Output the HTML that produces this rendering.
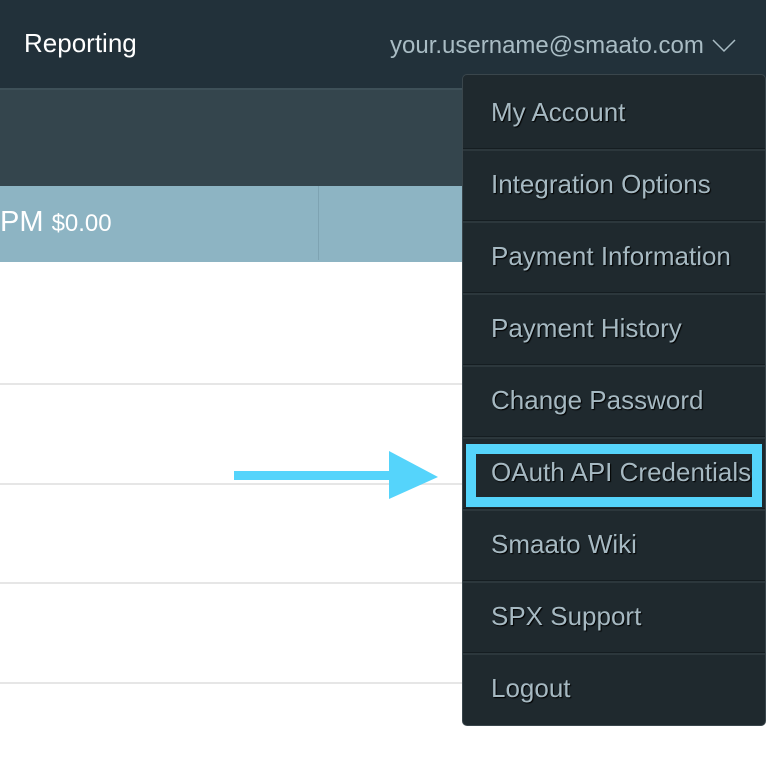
<!DOCTYPE html>
<html><head><style>
*{margin:0;padding:0;box-sizing:border-box}
body{width:766px;height:762px;overflow:hidden;background:#fff;font-family:"Liberation Sans",sans-serif;position:relative}
.hdr{position:absolute;left:0;top:0;width:766px;height:88px;background:#22313a}
.band{position:absolute;left:0;top:88px;width:766px;height:98px;background:#34454d;border-top:2px solid #3e5058}
.blue{position:absolute;left:0;top:186px;width:766px;height:76px;background:#8db4c3}
.div{position:absolute;left:318px;top:186px;width:1px;height:74px;background:#7ea3b2}
.hl{position:absolute;left:0;width:462px;height:2px;background:#e6e6e6}
.t{position:absolute;white-space:nowrap}
.dd{position:absolute;left:462px;top:74px;width:304px;height:652px;background:#1f292e;border:1px solid #3a464c;border-radius:5px;overflow:hidden}
.it{position:absolute;left:0;width:304px;height:72px;color:#a6b9c2;font-size:26px;padding-left:28px;line-height:72px;text-shadow:1px 1px 1px #000}
.sep{position:absolute;left:0;width:304px;height:3px;background:#2c373c;border-top:1px solid #151d21}
</style></head><body>
<div class="hdr"></div>
<div class="t" style="left:24px;top:28px;color:#fff;font-size:26px">Reporting</div>
<div class="t" style="left:390px;top:32px;color:#a9bcc4;font-size:24px">your.username@smaato.com</div>
<svg style="position:absolute;left:712px;top:38px" width="24" height="16"><path d="M1 2 L12 13 L23 2" stroke="#a9bcc4" stroke-width="1.5" fill="none"/></svg>
<div class="band"></div>
<div class="blue"></div>
<div class="div"></div>
<div class="t" style="left:0;top:206px;color:#fff;font-size:29px">PM <span style="font-size:24px">$0.00</span></div>
<div class="hl" style="top:383px"></div>
<div class="hl" style="top:483px"></div>
<div class="hl" style="top:582px"></div>
<div class="hl" style="top:682px"></div>
<svg style="position:absolute;left:230px;top:448px" width="212" height="56"><rect x="4" y="23" width="158" height="9" fill="#55d4fb"/><path d="M159 3 L208 29 L159 51 Z" fill="#55d4fb"/></svg>
<div class="dd">
<div class="it" style="top:1px">My Account</div>
<div class="sep" style="top:73px"></div>
<div class="it" style="top:73px">Integration Options</div>
<div class="sep" style="top:145px"></div>
<div class="it" style="top:145px">Payment Information</div>
<div class="sep" style="top:217px"></div>
<div class="it" style="top:217px">Payment History</div>
<div class="sep" style="top:289px"></div>
<div class="it" style="top:289px">Change Password</div>
<div class="sep" style="top:361px"></div>
<div class="it" style="top:361px">OAuth API Credentials</div>
<div class="sep" style="top:433px"></div>
<div class="it" style="top:433px">Smaato Wiki</div>
<div class="sep" style="top:505px"></div>
<div class="it" style="top:505px">SPX Support</div>
<div class="sep" style="top:577px"></div>
<div class="it" style="top:577px">Logout</div>
</div>
<div style="position:absolute;left:466px;top:444px;width:296px;height:63px;border:10px solid #55d4fb"></div>
</body></html>
